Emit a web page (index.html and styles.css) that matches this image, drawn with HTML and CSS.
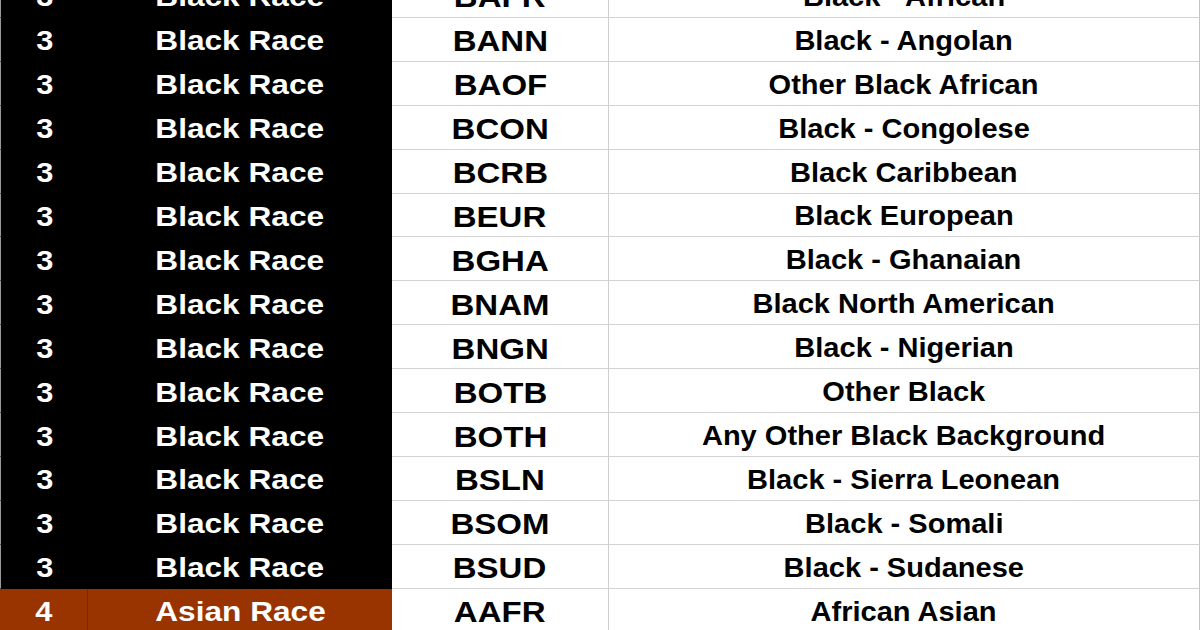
FILE: index.html
```html
<!DOCTYPE html>
<html>
<head>
<meta charset="utf-8">
<link rel="stylesheet" href="styles.css">
</head>
<body>
<div class="sheet">
  <div class="row black"><div class="c num"><span>3</span></div><div class="c race"><span>Black Race</span></div><div class="c code"><span>BAFR</span></div><div class="c desc"><span>Black - African</span></div></div>
  <div class="row black"><div class="c num"><span>3</span></div><div class="c race"><span>Black Race</span></div><div class="c code"><span>BANN</span></div><div class="c desc"><span>Black - Angolan</span></div></div>
  <div class="row black"><div class="c num"><span>3</span></div><div class="c race"><span>Black Race</span></div><div class="c code"><span>BAOF</span></div><div class="c desc"><span>Other Black African</span></div></div>
  <div class="row black"><div class="c num"><span>3</span></div><div class="c race"><span>Black Race</span></div><div class="c code"><span>BCON</span></div><div class="c desc"><span>Black - Congolese</span></div></div>
  <div class="row black"><div class="c num"><span>3</span></div><div class="c race"><span>Black Race</span></div><div class="c code"><span>BCRB</span></div><div class="c desc"><span>Black Caribbean</span></div></div>
  <div class="row black"><div class="c num"><span>3</span></div><div class="c race"><span>Black Race</span></div><div class="c code"><span>BEUR</span></div><div class="c desc"><span>Black European</span></div></div>
  <div class="row black"><div class="c num"><span>3</span></div><div class="c race"><span>Black Race</span></div><div class="c code"><span>BGHA</span></div><div class="c desc"><span>Black - Ghanaian</span></div></div>
  <div class="row black"><div class="c num"><span>3</span></div><div class="c race"><span>Black Race</span></div><div class="c code"><span>BNAM</span></div><div class="c desc"><span>Black North American</span></div></div>
  <div class="row black"><div class="c num"><span>3</span></div><div class="c race"><span>Black Race</span></div><div class="c code"><span>BNGN</span></div><div class="c desc"><span>Black - Nigerian</span></div></div>
  <div class="row black"><div class="c num"><span>3</span></div><div class="c race"><span>Black Race</span></div><div class="c code"><span>BOTB</span></div><div class="c desc"><span>Other Black</span></div></div>
  <div class="row black"><div class="c num"><span>3</span></div><div class="c race"><span>Black Race</span></div><div class="c code"><span>BOTH</span></div><div class="c desc"><span>Any Other Black Background</span></div></div>
  <div class="row black"><div class="c num"><span>3</span></div><div class="c race"><span>Black Race</span></div><div class="c code"><span>BSLN</span></div><div class="c desc"><span>Black - Sierra Leonean</span></div></div>
  <div class="row black"><div class="c num"><span>3</span></div><div class="c race"><span>Black Race</span></div><div class="c code"><span>BSOM</span></div><div class="c desc"><span>Black - Somali</span></div></div>
  <div class="row black"><div class="c num"><span>3</span></div><div class="c race"><span>Black Race</span></div><div class="c code"><span>BSUD</span></div><div class="c desc"><span>Black - Sudanese</span></div></div>
  <div class="row asian"><div class="c num"><span>4</span></div><div class="c race"><span>Asian Race</span></div><div class="c code"><span>AAFR</span></div><div class="c desc"><span>African Asian</span></div></div>
</div>
</body>
</html>
```

FILE: styles.css
```css
html, body {
  margin: 0;
  padding: 0;
  background: #ffffff;
  overflow: hidden;
  width: 1200px;
  height: 630px;
}

.sheet {
  margin-top: -26px;
  width: 1200px;
  font-family: "Liberation Sans", Arial, sans-serif;
  font-weight: bold;
}

.row {
  display: grid;
  grid-template-columns: 88px 304px 216px 592px;
  height: 43.92px;
  box-sizing: border-box;
}

.c {
  display: flex;
  align-items: center;
  justify-content: center;
  box-sizing: border-box;
  padding-top: 4px;
  border-bottom: 1px solid #d2d2d2;
  overflow: hidden;
  white-space: nowrap;
}

.c span {
  display: inline-block;
  transform: scaleX(1.1);
}

.num, .race {
  color: #ffffff;
  font-size: 28px;
}

.race span {
  transform: scaleX(1.13);
}

.code {
  color: #000000;
  font-size: 30px;
}

.desc {
  color: #000000;
  font-size: 27px;
  border-left: 1px solid #cfcfcf;
  border-right: 1px solid #c4c4c4;
}

.desc span {
  transform: scaleX(1.075);
}

.black .num, .black .race {
  background: #000000;
  border-bottom-color: #000000;
}

.black .num {
  border-left: 1px solid #9a9a9a;
}

.asian .num, .asian .race {
  background: #993300;
  border-bottom-color: #993300;
}

.asian .num {
  border-right: 1px solid #7d2900;
}
```
